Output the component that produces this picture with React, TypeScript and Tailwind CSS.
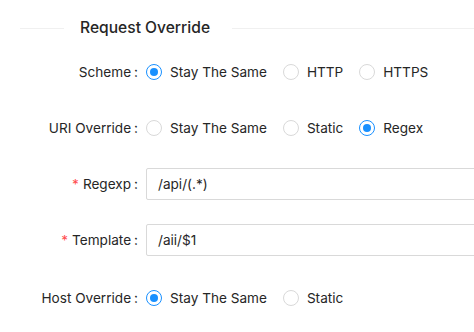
import React from 'react';

type Option = { label: string; checked?: boolean };

function Radio({ label, checked }: Option) {
  return (
    <label className="mr-2 inline-flex items-center">
      <span
        className={
          checked
            ? 'flex h-4 w-4 items-center justify-center rounded-full border border-[#1890ff] bg-white'
            : 'flex h-4 w-4 items-center justify-center rounded-full border border-[#d9d9d9] bg-white'
        }
      >
        {checked && <span className="h-2 w-2 rounded-full bg-[#1890ff]" />}
      </span>
      <span className="px-2">{label}</span>
    </label>
  );
}

function FieldLabel({ text, required }: { text: string; required?: boolean }) {
  return (
    <div className="flex w-[146px] shrink-0 items-center justify-end">
      {required && <span className="mr-1 text-[#ff4d4f]">*</span>}
      <span>{text}</span>
      <span className="ml-[3px] mr-2">:</span>
    </div>
  );
}

function RadioRow({ label, options }: { label: string; options: Option[] }) {
  return (
    <div className="mb-6 flex h-8 items-center">
      <FieldLabel text={label} />
      <div className="flex items-center">
        {options.map((o) => (
          <Radio key={o.label} label={o.label} checked={o.checked} />
        ))}
      </div>
    </div>
  );
}

function InputRow({ label, value }: { label: string; value: string }) {
  return (
    <div className="mb-6 flex h-8 items-center">
      <FieldLabel text={label} required />
      <div className="flex h-8 flex-1 items-center rounded-[2px] border border-[#d9d9d9] bg-white px-[11px]">
        {value}
      </div>
    </div>
  );
}

export default function App() {
  return (
    <div className="h-[332px] w-[474px] overflow-hidden bg-white font-['Inter',sans-serif] text-[13.6px] text-[#262626]">
      <div className="w-[640px]">
        {/* Section divider */}
        <div className="flex h-[56px] items-center">
          <div className="ml-5 h-px w-[44px] bg-[#f0f0f0]" />
          <span className="pl-4 pr-[22px] text-[15.6px] font-medium leading-6 text-[#262626]">
            Request Override
          </span>
          <div className="h-px flex-1 bg-[#f0f0f0]" />
        </div>

        <RadioRow
          label="Scheme"
          options={[{ label: 'Stay The Same', checked: true }, { label: 'HTTP' }, { label: 'HTTPS' }]}
        />
        <RadioRow
          label="URI Override"
          options={[{ label: 'Stay The Same' }, { label: 'Static' }, { label: 'Regex', checked: true }]}
        />
        <InputRow label="Regexp" value="/api/(.*)" />
        <InputRow label="Template" value="/aii/$1" />
        <div className="pt-[2px]">
          <RadioRow
            label="Host Override"
            options={[{ label: 'Stay The Same', checked: true }, { label: 'Static' }]}
          />
        </div>
      </div>
    </div>
  );
}
